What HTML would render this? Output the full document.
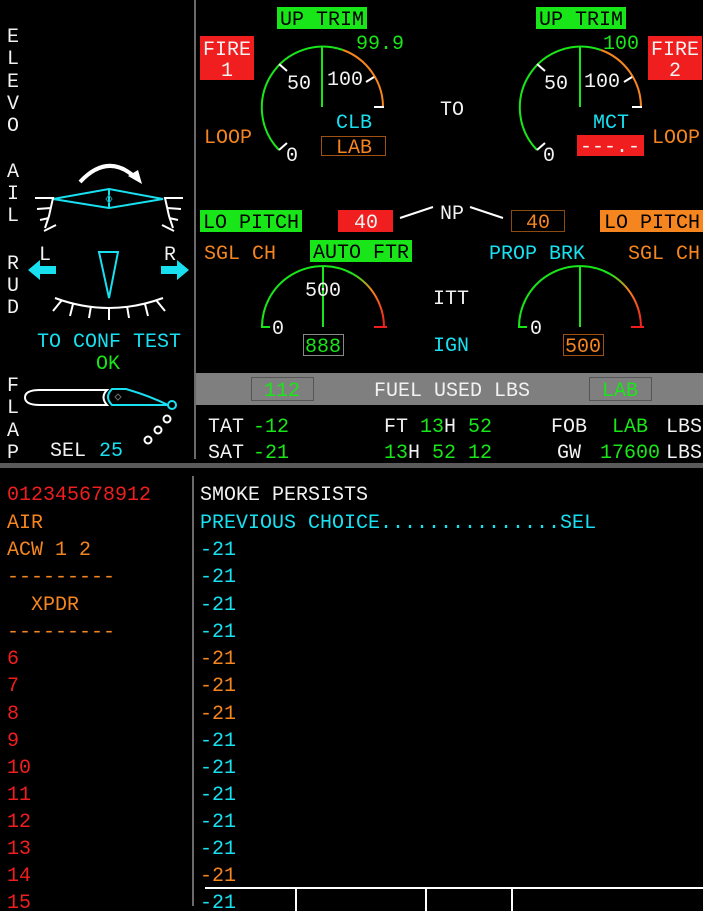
<!DOCTYPE html>
<html><head><meta charset="utf-8"><style>
html,body{margin:0;padding:0;background:#000;width:703px;height:911px;overflow:hidden}
svg{display:block}
text{font-family:"Liberation Mono",monospace;font-size:20px}
.w{fill:#f2f2f2}.g{fill:#19e619}.c{fill:#19e0f0}.o{fill:#f5851f}.r{fill:#f01e1e}.k{fill:#000}
</style></head><body>
<svg width="703" height="911" viewBox="0 0 703 911" xmlns="http://www.w3.org/2000/svg">
<rect width="703" height="911" fill="#000"/>
<rect x="194" y="0" width="2" height="459" fill="#6a6a6a"/>
<rect x="0" y="463" width="703" height="5" fill="#5a5a5a"/>
<rect x="192" y="476" width="2" height="430" fill="#6a6a6a"/>

<g class="w" text-anchor="middle">
<text x="13" y="42">E</text><text x="13" y="64">L</text><text x="13" y="87">E</text><text x="13" y="109">V</text><text x="13" y="131">O</text>
<text x="13" y="177">A</text><text x="13" y="199">I</text><text x="13" y="221">L</text>
<text x="13" y="269">R</text><text x="13" y="291">U</text><text x="13" y="313">D</text>
<text x="13" y="391">F</text><text x="13" y="413">L</text><text x="13" y="436">A</text><text x="13" y="458">P</text>
</g>

<path d="M80 182 Q108 152 136 178" stroke="#fff" stroke-width="4" fill="none"/>
<polygon points="128,176 142,184 138,170" fill="#fff"/>
<polygon points="53,199 109,189 163,199 109,208" fill="none" stroke="#19e0f0" stroke-width="2"/>
<line x1="109" y1="189" x2="109" y2="208" stroke="#19e0f0" stroke-width="2"/>
<polygon points="106,199 109,195 112,199 109,203" fill="none" stroke="#19a0b0" stroke-width="1"/>
<g stroke="#fff" stroke-width="2" fill="none">
<path d="M35 198 L53 198 L49 216 L45 228"/>
<line x1="37" y1="209" x2="51" y2="208"/><line x1="40" y1="220" x2="49" y2="218"/><line x1="44" y1="231" x2="56" y2="225"/>
<path d="M183 198 L165 198 L169 216 L173 228"/>
<line x1="181" y1="209" x2="167" y2="208"/><line x1="178" y1="220" x2="169" y2="218"/><line x1="174" y1="231" x2="162" y2="225"/>
</g>

<text x="39" y="260" class="w">L</text><text x="164" y="260" class="w">R</text>
<polygon points="28,270 40,260 40,266 56,266 56,274 40,274 40,280" fill="#19e0f0"/>
<polygon points="189,270 177,260 177,266 161,266 161,274 177,274 177,280" fill="#19e0f0"/>
<polygon points="99,252 118,252 109,298" fill="none" stroke="#19e0f0" stroke-width="2"/>
<g stroke="#fff" stroke-width="2" fill="none">
<path d="M55 298 Q109 318 163 298"/>
<line x1="109" y1="307" x2="109" y2="320"/>
<line x1="91" y1="306" x2="89" y2="318"/><line x1="127" y1="306" x2="129" y2="318"/>
<line x1="73" y1="304" x2="70" y2="316"/><line x1="145" y1="304" x2="148" y2="316"/>
<line x1="62" y1="300" x2="53" y2="311"/><line x1="156" y1="300" x2="165" y2="311"/>
</g>
<text x="109" y="347" text-anchor="middle" class="c">TO CONF TEST</text>
<text x="108" y="369" text-anchor="middle" class="g">OK</text>

<path d="M107 390 L40 390 Q25 390 25 397.5 Q25 405 40 405 L107 405 Q100 397 107 390 Z" fill="none" stroke="#fff" stroke-width="2"/>
<path d="M112 389 Q104 397 112 405 L168 405 Q150 396 126 389 Z" fill="none" stroke="#19e0f0" stroke-width="2" stroke-linejoin="round"/>
<polygon points="115,397 118,394 121,397 118,400" fill="none" stroke="#6a6a6a" stroke-width="1"/>
<circle cx="172" cy="405" r="4" fill="none" stroke="#19e0f0" stroke-width="2"/>
<g fill="none" stroke="#fff" stroke-width="2"><circle cx="167" cy="419" r="3.5"/><circle cx="158" cy="430" r="3.5"/><circle cx="148" cy="440" r="3.5"/></g>
<text x="50" y="456" class="w">SEL</text><text x="99" y="456" class="c">25</text>

<rect x="277" y="7" width="90" height="22" fill="#19e619"/><text x="322" y="25" text-anchor="middle" class="k">UP TRIM</text>
<rect x="536" y="7" width="90" height="22" fill="#19e619"/><text x="581" y="25" text-anchor="middle" class="k">UP TRIM</text>
<rect x="200" y="36" width="54" height="44" fill="#f01e1e"/><text x="227" y="55" text-anchor="middle" class="w">FIRE</text><text x="227" y="76" text-anchor="middle" class="w">1</text>
<rect x="648" y="36" width="54" height="44" fill="#f01e1e"/><text x="675" y="55" text-anchor="middle" class="w">FIRE</text><text x="675" y="76" text-anchor="middle" class="w">2</text>

<g fill="none" stroke-width="2">
<path d="M279 150 A61 61 0 0 1 343 50" stroke="#19e619"/>
<path d="M343 50 A61 61 0 0 1 383 107" stroke="#f5851f"/>
<line x1="322" y1="47" x2="322" y2="107" stroke="#19e619"/>
<g stroke="#fff"><line x1="279" y1="64" x2="287" y2="71"/><line x1="279" y1="150" x2="287" y2="143"/><line x1="374" y1="77" x2="366" y2="82"/><line x1="374" y1="107" x2="384" y2="107"/></g>
<path d="M537 150 A61 61 0 0 1 601 50" stroke="#19e619"/>
<path d="M601 50 A61 61 0 0 1 641 107" stroke="#f5851f"/>
<line x1="580" y1="47" x2="580" y2="107" stroke="#19e619"/>
<g stroke="#fff"><line x1="537" y1="64" x2="545" y2="71"/><line x1="537" y1="150" x2="545" y2="143"/><line x1="632" y1="77" x2="624" y2="82"/><line x1="632" y1="107" x2="642" y2="107"/></g>
</g>
<text x="299" y="89" text-anchor="middle" class="w">50</text><text x="345" y="85" text-anchor="middle" class="w">100</text><text x="292" y="161" text-anchor="middle" class="w">0</text>
<text x="380" y="49" text-anchor="middle" class="g">99.9</text>
<text x="354" y="128" text-anchor="middle" class="c">CLB</text>
<rect x="321.5" y="136.5" width="64" height="19" fill="none" stroke="#a05010" stroke-width="1"/><text x="354" y="153" text-anchor="middle" class="o">LAB</text>
<text x="228" y="143" text-anchor="middle" class="o">LOOP</text>
<text x="452" y="115" text-anchor="middle" class="w">TO</text>
<text x="556" y="89" text-anchor="middle" class="w">50</text><text x="602" y="87" text-anchor="middle" class="w">100</text><text x="549" y="161" text-anchor="middle" class="w">0</text>
<text x="621" y="49" text-anchor="middle" class="g">100</text>
<text x="611" y="128" text-anchor="middle" class="c">MCT</text>
<rect x="577" y="135" width="67" height="21" fill="#f01e1e"/><text x="610" y="152" text-anchor="middle" class="w">---.-</text>
<text x="676" y="143" text-anchor="middle" class="o">LOOP</text>

<rect x="200" y="210" width="102" height="22" fill="#19e619"/><text x="251" y="228" text-anchor="middle" class="k">LO PITCH</text>
<rect x="338" y="210" width="55" height="22" fill="#f01e1e"/><text x="366" y="228" text-anchor="middle" class="w">40</text>
<text x="452" y="219" text-anchor="middle" class="w">NP</text>
<line x1="400" y1="218" x2="433" y2="207" stroke="#fff" stroke-width="2"/><line x1="470" y1="207" x2="503" y2="218" stroke="#fff" stroke-width="2"/>
<rect x="511.5" y="210.5" width="53" height="21" fill="none" stroke="#8a4a10" stroke-width="1"/><text x="538" y="228" text-anchor="middle" class="o">40</text>
<rect x="600" y="210" width="103" height="22" fill="#f5851f"/><text x="652" y="228" text-anchor="middle" class="k">LO PITCH</text>
<text x="204" y="259" class="o">SGL CH</text>
<rect x="310" y="240" width="102" height="22" fill="#19e619"/><text x="361" y="258" text-anchor="middle" class="k">AUTO FTR</text>
<text x="537" y="259" text-anchor="middle" class="c">PROP BRK</text>
<text x="628" y="259" class="o">SGL CH</text>

<defs>
<linearGradient id="gr" x1="0" y1="0" x2="1" y2="1"><stop offset="0" stop-color="#19e619"/><stop offset="0.45" stop-color="#f5851f"/><stop offset="1" stop-color="#f01e1e"/></linearGradient>
</defs>
<g fill="none" stroke-width="2">
<path d="M270 327 L262 327 A61 61 0 0 1 353 274" stroke="#19e619"/>
<path d="M353 274 A61 61 0 0 1 384 327" stroke="url(#gr)"/>
<line x1="374" y1="327" x2="387" y2="327" stroke="#f01e1e"/>
<line x1="323" y1="266" x2="323" y2="327" stroke="#19e619"/>
<path d="M527 327 L519 327 A61 61 0 0 1 610 274" stroke="#19e619"/>
<path d="M610 274 A61 61 0 0 1 641 327" stroke="url(#gr)"/>
<line x1="631" y1="327" x2="644" y2="327" stroke="#f01e1e"/>
<line x1="580" y1="266" x2="580" y2="327" stroke="#19e619"/>
</g>
<text x="278" y="334" text-anchor="middle" class="w">0</text>
<text x="323" y="296" text-anchor="middle" class="w">500</text>
<rect x="303.5" y="334.5" width="40" height="21" fill="none" stroke="#888" stroke-width="1"/><text x="323" y="352" text-anchor="middle" class="g">888</text>
<text x="536" y="334" text-anchor="middle" class="w">0</text>
<rect x="563.5" y="334.5" width="40" height="21" fill="none" stroke="#a05010" stroke-width="1"/><text x="583" y="352" text-anchor="middle" class="o">500</text>
<text x="451" y="304" text-anchor="middle" class="w">ITT</text>
<text x="451" y="351" text-anchor="middle" class="c">IGN</text>

<rect x="196" y="373" width="507" height="32" fill="#7f7f7f"/>
<rect x="251.5" y="377.5" width="62" height="23" fill="none" stroke="#555" stroke-width="1"/><text x="282" y="396" text-anchor="middle" class="g">112</text>
<text x="452" y="396" text-anchor="middle" class="w">FUEL USED LBS</text>
<rect x="589.5" y="377.5" width="62" height="23" fill="none" stroke="#555" stroke-width="1"/><text x="620" y="396" text-anchor="middle" class="g">LAB</text>

<text x="208" y="432"><tspan class="w">TAT</tspan><tspan class="g" x="253">-12</tspan></text>
<text x="208" y="458"><tspan class="w">SAT</tspan><tspan class="g" x="253">-21</tspan></text>
<text x="384" y="432"><tspan class="w">FT </tspan><tspan class="g">13</tspan><tspan class="w">H </tspan><tspan class="g">52</tspan></text>
<text x="384" y="458"><tspan class="g">13</tspan><tspan class="w">H </tspan><tspan class="g">52 12</tspan></text>
<text x="551" y="432" class="w">FOB</text><text x="612" y="432" class="g">LAB</text><text x="666" y="432" class="w">LBS</text>
<text x="557" y="458" class="w">GW</text><text x="600" y="458" class="g">17600</text><text x="666" y="458" class="w">LBS</text>

<g>
<text x="7" y="500" class="r">012345678912</text>
<text x="7" y="528" class="o">AIR</text>
<text x="7" y="555" class="o">ACW 1 2</text>
<text x="7" y="582" class="o">---------</text>
<text x="31" y="610" class="o">XPDR</text>
<text x="7" y="637" class="o">---------</text>
<text x="7" y="664" class="r">6</text>
<text x="7" y="691" class="r">7</text>
<text x="7" y="719" class="r">8</text>
<text x="7" y="746" class="r">9</text>
<text x="7" y="773" class="r">10</text>
<text x="7" y="800" class="r">11</text>
<text x="7" y="827" class="r">12</text>
<text x="7" y="854" class="r">13</text>
<text x="7" y="881" class="r">14</text>
<text x="7" y="908" class="r">15</text>
</g>
<g>
<text x="200" y="500" class="w">SMOKE PERSISTS</text>
<text x="200" y="528" class="c">PREVIOUS CHOICE...............SEL</text>
<text x="200" y="555" class="c">-21</text>
<text x="200" y="582" class="c">-21</text>
<text x="200" y="610" class="c">-21</text>
<text x="200" y="637" class="c">-21</text>
<text x="200" y="664" class="o">-21</text>
<text x="200" y="691" class="o">-21</text>
<text x="200" y="719" class="o">-21</text>
<text x="200" y="746" class="c">-21</text>
<text x="200" y="773" class="c">-21</text>
<text x="200" y="800" class="c">-21</text>
<text x="200" y="827" class="c">-21</text>
<text x="200" y="854" class="c">-21</text>
<text x="200" y="881" class="o">-21</text>
<text x="200" y="908" class="c">-21</text>
</g>
<g stroke="#fff" stroke-width="2">
<line x1="205" y1="888" x2="703" y2="888"/>
<line x1="296" y1="888" x2="296" y2="911"/>
<line x1="426" y1="888" x2="426" y2="911"/>
<line x1="512" y1="888" x2="512" y2="911"/>
</g>
</svg>
</body></html>
